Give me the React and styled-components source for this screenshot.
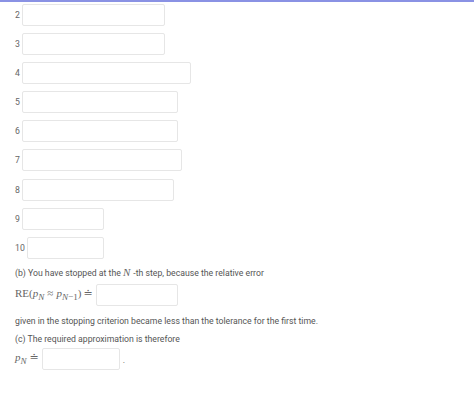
import React from 'react'
import styled, { createGlobalStyle } from 'styled-components'

const GlobalStyle = createGlobalStyle`
  body {
    margin: 0;
    background: #fff;
    font-family: Roboto, "Liberation Sans", sans-serif;
    color: #555;
  }
`

const TopBar = styled.div`
  height: 2px;
  background: #8a92e4;
`

const Page = styled.div`
  padding: 2px 15px 0;
  font-size: 8.7px;
`

const Row = styled.div`
  display: flex;
  align-items: center;
  height: 22px;
  margin-bottom: 7.1px;
`

const Label = styled.span`
  margin-right: 2.5px;
  color: #666;
`

const Box = styled.div`
  width: ${p => p.w}px;
  height: 22px;
  box-sizing: border-box;
  border: 1px solid #e6e6e6;
  border-radius: 2px;
  background: #fff;
  flex: none;
`

const Text = styled.p`
  margin: 0;
  line-height: 12px;
  margin-top: ${p => p.top || 0}px;
`

const MathRow = styled.div`
  display: flex;
  align-items: center;
  margin-top: ${p => p.top || 0}px;
`

const MathText = styled.span`
  font-family: "Liberation Serif", "DejaVu Serif", serif;
  font-size: 11px;
  color: #666;
  margin-right: ${p => p.gap ?? 3}px;
  white-space: nowrap;
`

const Var = styled.i`
  font-style: italic;
`

const Op = styled.span`
  margin: 0 ${p => p.space ?? 3}px;
`

const Dot = styled.span`
  margin-left: 3px;
  margin-top: 2px;
`

const rows = [
  ['2', 143], ['3', 143], ['4', 169], ['5', 156], ['6', 156],
  ['7', 160], ['8', 152], ['9', 82], ['10', 77],
]

const App = () => {
  return <>
    <GlobalStyle />
    <TopBar />
    <Page>
      {rows.map(([n, w]) => (
        <Row key={n}>
          <Label>{n}</Label>
          <Box w={w} />
        </Row>
      ))}
      <Text top={3}>
        (b) You have stopped at the <MathText gap={3}><Var>N</Var></MathText>-th step, because the relative error
      </Text>
      <MathRow top={5}>
        <MathText gap={1}>
          RE(<Var>p</Var><sub><Var>N</Var></sub><Op>≈</Op><Var>p</Var><sub><Var>N</Var>−1</sub>)<Op space={2}>≐</Op>
        </MathText>
        <Box w={82} />
      </MathRow>
      <Text top={9}>given in the stopping criterion became less than the tolerance for the first time.</Text>
      <Text top={6}>(c) The required approximation is therefore</Text>
      <MathRow top={3}>
        <MathText gap={0}>
          <Var>p</Var><sub><Var>N</Var></sub><Op space={3}>≐</Op>
        </MathText>
        <Box w={78} />
        <Dot>.</Dot>
      </MathRow>
    </Page>
  </>
}

export default App
